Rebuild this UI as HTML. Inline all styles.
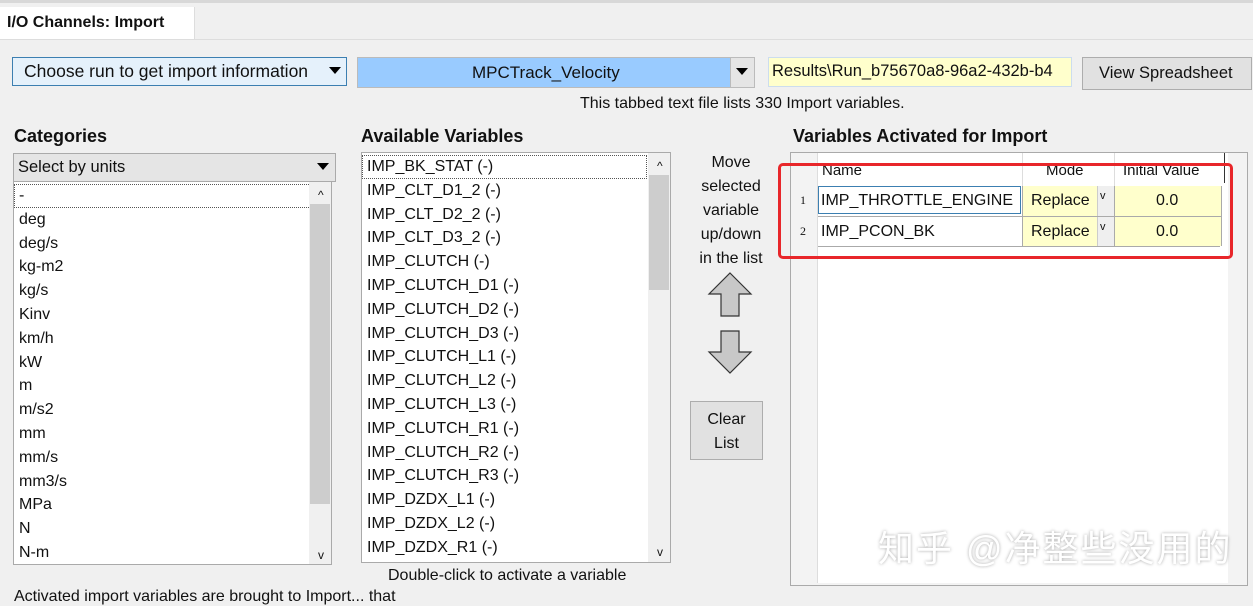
<!DOCTYPE html><html><head><meta charset="utf-8"><style>
body{margin:0;width:1253px;height:593px;background:#f0f0f0;font-family:"Liberation Sans","Noto Sans CJK SC",sans-serif;font-size:15px;color:#111;position:relative;overflow:hidden}
.a{position:absolute}
.list div{height:23.8px;line-height:23.8px;padding-left:5px;white-space:nowrap}
.sb{position:absolute;background:#f0f0f0;width:17px}
.th{background:#cdcdcd}
h3{margin:0;font-size:18px;font-weight:bold;position:absolute}
</style></head><body>
<div class="a" style="left:0;top:0;width:1253px;height:3px;background:#d8d8d8"></div>
<div class="a" style="left:0;top:7px;width:194px;height:33px;background:#fff;border-right:1px solid #ddd"></div>
<div class="a" style="left:7px;top:14px;font-weight:bold;font-size:16px">I/O Channels: Import</div>
<div class="a" style="left:0;top:39px;width:1253px;height:1px;background:#ddd"></div>

<div class="a" style="left:12px;top:57px;width:333px;height:27px;background:#e5f1fb;border:1px solid #3c7fb1"></div>
<div class="a" style="left:24px;top:61px;font-size:17.5px">Choose run to get import information</div>
<div class="a" style="left:329px;top:67px;border:6px solid transparent;border-top:7px solid #000"></div>
<div class="a" style="left:357px;top:57px;width:373px;height:29px;background:#99cbff;border:1px solid #bbb"></div>
<div class="a" style="left:730px;top:57px;width:23px;height:29px;background:#e5e5e5;border:1px solid #bbb"></div>
<div class="a" style="left:736px;top:68px;border:6px solid transparent;border-top:7px solid #000"></div>
<div class="a" style="left:472px;top:63px;font-size:17px">MPCTrack_Velocity</div>
<div class="a" style="left:768px;top:57px;width:302px;height:28px;background:#ffffcc;border:1px solid #cde"></div>
<div class="a" style="left:772px;top:62px;font-size:16.5px;white-space:nowrap">Results\Run_b75670a8-96a2-432b-b4</div>
<div class="a" style="left:1082px;top:57px;width:168px;height:31px;background:#e1e1e1;border:1px solid #adadad"></div>
<div class="a" style="left:1099px;top:64px;font-size:16.5px">View Spreadsheet</div>
<div class="a" style="left:580px;top:95px;font-size:16px">This tabbed text file lists 330 Import variables.</div>

<h3 style="left:14px;top:126px">Categories</h3>
<h3 style="left:361px;top:126px">Available Variables</h3>
<h3 style="left:793px;top:126px">Variables Activated for Import</h3>

<div class="a" style="left:13px;top:153px;width:321px;height:27px;background:#e5e5e5;border:1px solid #aaa"></div>
<div class="a" style="left:18px;top:158px;font-size:16.5px">Select by units</div>
<div class="a" style="left:317px;top:163px;border:6px solid transparent;border-top:7px solid #000"></div>
<div class="a list" style="left:13px;top:181px;width:317px;height:382px;background:#fff;border:1px solid #aaa;font-size:16px">
<div style="outline:1px dotted #555;outline-offset:-1px;width:292px;margin-top:2px">-</div><div>deg</div><div>deg/s</div><div>kg-m2</div><div>kg/s</div><div>Kinv</div><div>km/h</div><div>kW</div><div>m</div><div>m/s2</div><div>mm</div><div>mm/s</div><div>mm3/s</div><div>MPa</div><div>N</div><div>N-m</div>
<div class="sb" style="right:0;top:0;height:382px"><div class="a th" style="left:1px;top:22px;width:15px;height:300px"></div><div class="a" style="left:4px;top:2px;font-size:12px">^</div><div class="a" style="left:4px;top:362px;font-size:12px">v</div></div>
</div>

<div class="a list" style="left:361px;top:152px;width:308px;height:409px;background:#fff;border:1px solid #aaa;font-size:16px">
<div style="outline:1px dotted #555;outline-offset:-1px;width:280px;margin-top:2px">IMP_BK_STAT (-)</div><div>IMP_CLT_D1_2 (-)</div><div>IMP_CLT_D2_2 (-)</div><div>IMP_CLT_D3_2 (-)</div><div>IMP_CLUTCH (-)</div><div>IMP_CLUTCH_D1 (-)</div><div>IMP_CLUTCH_D2 (-)</div><div>IMP_CLUTCH_D3 (-)</div><div>IMP_CLUTCH_L1 (-)</div><div>IMP_CLUTCH_L2 (-)</div><div>IMP_CLUTCH_L3 (-)</div><div>IMP_CLUTCH_R1 (-)</div><div>IMP_CLUTCH_R2 (-)</div><div>IMP_CLUTCH_R3 (-)</div><div>IMP_DZDX_L1 (-)</div><div>IMP_DZDX_L2 (-)</div><div>IMP_DZDX_R1 (-)</div>
<div class="sb" style="right:0;top:0;height:409px"><div class="a th" style="left:1px;top:22px;width:15px;height:115px"></div><div class="a" style="left:4px;top:2px;font-size:12px">^</div><div class="a" style="left:4px;top:388px;font-size:12px">v</div></div>
</div>
<div class="a" style="left:388px;top:567px;font-size:16px">Double-click to activate a variable</div>
<div class="a" style="left:14px;top:588px;font-size:16px">Activated import variables are brought to Import... that</div>

<div class="a" style="left:690px;top:151px;width:82px;text-align:center;font-size:16px;line-height:24px">Move<br>selected<br>variable<br>up/down<br>in the list</div>
<svg class="a" style="left:707px;top:272px" width="46" height="104"><path d="M23 1 L44 22 L32 22 L32 44 L14 44 L14 22 L2 22 Z" fill="#c8c8c8" stroke="#333" stroke-width="1.2"/><path d="M14 59 L32 59 L32 80 L44 80 L23 101 L2 80 L14 80 Z" fill="#c8c8c8" stroke="#333" stroke-width="1.2"/></svg>
<div class="a" style="left:690px;top:401px;width:73px;height:59px;background:#e1e1e1;border:1px solid #adadad;text-align:center;line-height:24px;padding-top:6px;box-sizing:border-box;font-size:16px">Clear<br>List</div>

<div class="a" style="left:790px;top:152px;width:456px;height:432px;background:#f3f3f3;border:1px solid #aaa"></div>
<div class="a" style="left:817px;top:153px;width:410px;height:430px;background:#fff;border-left:1px solid #ddd"></div>
<div class="a" style="left:822px;top:162px;font-size:15px">Name</div>
<div class="a" style="left:1046px;top:162px;font-size:15px">Mode</div>
<div class="a" style="left:1123px;top:162px;font-size:15px">Initial Value</div>
<div class="a" style="left:1022px;top:153px;width:1px;height:33px;background:#ddd"></div>
<div class="a" style="left:1114px;top:153px;width:1px;height:33px;background:#ddd"></div>
<div class="a" style="left:1224px;top:153px;width:1px;height:30px;background:#333"></div>
<div class="a" style="left:800px;top:193px;font-size:12px;font-family:'Liberation Serif',serif">1</div>
<div class="a" style="left:800px;top:224px;font-size:12px;font-family:'Liberation Serif',serif">2</div>
<div class="a" style="left:818px;top:186px;width:203px;height:28px;border:1px solid #3c7fb1;box-sizing:border-box;background:#fff"></div>
<div class="a" style="left:821px;top:192px;font-size:16px">IMP_THROTTLE_ENGINE</div>
<div class="a" style="left:821px;top:223px;font-size:16px">IMP_PCON_BK</div>
<div class="a" style="left:818px;top:216px;width:402px;height:1px;background:#aaa"></div>
<div class="a" style="left:818px;top:246px;width:402px;height:1px;background:#aaa"></div>
<div class="a" style="left:1022px;top:186px;width:75px;height:60px;background:#ffffcc;border-left:1px solid #aaa"></div>
<div class="a" style="left:1097px;top:186px;width:17px;height:60px;background:#efefef;border-left:1px solid #ccc"></div>
<div class="a" style="left:1114px;top:186px;width:106px;height:60px;background:#ffffcc;border-left:1px solid #aaa;border-right:1px solid #aaa"></div>
<div class="a" style="left:1022px;top:216px;width:199px;height:1px;background:#aaa"></div>
<div class="a" style="left:1031px;top:192px;font-size:16px">Replace</div>
<div class="a" style="left:1031px;top:223px;font-size:16px">Replace</div>
<div class="a" style="left:1100px;top:190px;font-size:11px">v</div>
<div class="a" style="left:1100px;top:221px;font-size:11px">v</div>
<div class="a" style="left:1156px;top:192px;font-size:16px">0.0</div>
<div class="a" style="left:1156px;top:223px;font-size:16px">0.0</div>
<div class="a" style="left:778px;top:163px;width:449px;height:90px;border:3px solid #e8262a;border-radius:5px"></div>

<div class="a" style="left:878px;top:520px;font-size:36px;color:#fff;text-shadow:0 0 3px rgba(0,0,0,.35);letter-spacing:2px;white-space:nowrap">知乎 @净整些没用的</div>
</body></html>
